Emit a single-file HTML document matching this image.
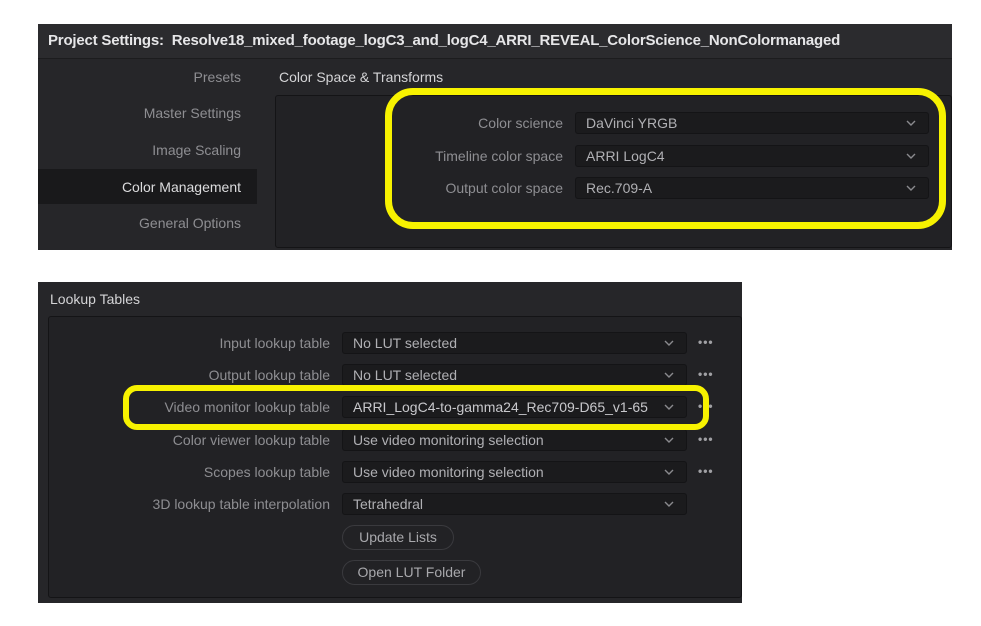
<!DOCTYPE html>
<html><head><meta charset="utf-8"><style>
*{margin:0;padding:0;box-sizing:border-box}
body{width:981px;height:626px;background:#fff;position:relative;overflow:hidden;font-family:"Liberation Sans",sans-serif;}
.a{position:absolute}
.t{position:absolute;white-space:nowrap;font-size:14px;color:#8e8e92;line-height:18px}
.r{text-align:right}
.dd{position:absolute;background:#1b1b1d;border:1px solid #141416;border-radius:3px;color:#b0b0b4;font-size:14px;line-height:20px;padding-left:10px;white-space:nowrap}
.dd svg{position:absolute;right:12px;top:7px}
.dots{position:absolute;color:#a0a0a4;font-size:12px;letter-spacing:1px;font-weight:bold}
.btn{position:absolute;border:1px solid #3a3a3e;border-radius:13px;color:#a8a8ac;font-size:14px;line-height:23px;text-align:center;background:#222225}
</style></head><body>
<div class="a" style="left:38px;top:24px;width:914px;height:226px;background:#262629"></div>
<div class="a" style="left:38px;top:24px;width:914px;height:35px;background:#2b2b2e;border-bottom:1px solid #1c1c1e"></div>
<div class="t" style="left:48px;top:32px;color:#e6e6e8;font-size:15px;font-weight:bold;letter-spacing:-0.2px">Project Settings:&nbsp; Resolve18_mixed_footage_logC3_and_logC4_ARRI_REVEAL_ColorScience_NonColormanaged</div>
<div class="t r" style="left:38px;width:203px;top:68px">Presets</div>
<div class="t r" style="left:38px;width:203px;top:104px">Master Settings</div>
<div class="t r" style="left:38px;width:203px;top:141px">Image Scaling</div>
<div class="a" style="left:38px;top:169px;width:219px;height:35px;background:#19191b"></div>
<div class="t r" style="left:38px;width:203px;top:178px;color:#dcdcde">Color Management</div>
<div class="t r" style="left:38px;width:203px;top:214px">General Options</div>
<div class="t" style="left:279px;top:68px;color:#d4d4d6">Color Space &amp; Transforms</div>
<div class="a" style="left:275px;top:95px;width:677px;height:153px;background:#222225;border:1px solid #141416;border-radius:3px"></div>
<div class="t r" style="left:380px;width:183px;top:114px">Color science</div>
<div class="t r" style="left:380px;width:183px;top:147px">Timeline color space</div>
<div class="t r" style="left:380px;width:183px;top:179px">Output color space</div>
<div class="dd" style="left:575px;top:112px;width:354px;height:22px">DaVinci YRGB<svg width="10" height="7"><path d="M1 1L5 5L9 1" stroke="#8a8a8e" stroke-width="1.4" fill="none"/></svg></div>
<div class="dd" style="left:575px;top:145px;width:354px;height:22px">ARRI LogC4<svg width="10" height="7"><path d="M1 1L5 5L9 1" stroke="#8a8a8e" stroke-width="1.4" fill="none"/></svg></div>
<div class="dd" style="left:575px;top:177px;width:354px;height:22px">Rec.709-A<svg width="10" height="7"><path d="M1 1L5 5L9 1" stroke="#8a8a8e" stroke-width="1.4" fill="none"/></svg></div>
<div class="a" style="left:385px;top:88px;width:561px;height:141px;border:7px solid #f7f200;border-radius:28px"></div>
<div class="a" style="left:38px;top:282px;width:704px;height:321px;background:#262629"></div>
<div class="t" style="left:50px;top:290px;color:#d4d4d6">Lookup Tables</div>
<div class="a" style="left:48px;top:316px;width:694px;height:282px;background:#222225;border:1px solid #141416;border-radius:3px"></div>
<div class="t r" style="left:100px;width:230px;top:334px">Input lookup table</div>
<div class="t r" style="left:100px;width:230px;top:366px">Output lookup table</div>
<div class="t r" style="left:100px;width:230px;top:398px">Video monitor lookup table</div>
<div class="t r" style="left:100px;width:230px;top:431px">Color viewer lookup table</div>
<div class="t r" style="left:100px;width:230px;top:463px">Scopes lookup table</div>
<div class="t r" style="left:100px;width:230px;top:495px">3D lookup table interpolation</div>
<div class="dd" style="left:342px;top:332px;width:345px;height:22px">No LUT selected<svg width="10" height="7"><path d="M1 1L5 5L9 1" stroke="#8a8a8e" stroke-width="1.4" fill="none"/></svg></div>
<div class="dd" style="left:342px;top:364px;width:345px;height:22px">No LUT selected<svg width="10" height="7"><path d="M1 1L5 5L9 1" stroke="#8a8a8e" stroke-width="1.4" fill="none"/></svg></div>
<div class="dd" style="left:342px;top:396px;width:345px;height:22px;color:#c8c8cc">ARRI_LogC4-to-gamma24_Rec709-D65_v1-65<svg width="10" height="7"><path d="M1 1L5 5L9 1" stroke="#8a8a8e" stroke-width="1.4" fill="none"/></svg></div>
<div class="dd" style="left:342px;top:429px;width:345px;height:22px">Use video monitoring selection<svg width="10" height="7"><path d="M1 1L5 5L9 1" stroke="#8a8a8e" stroke-width="1.4" fill="none"/></svg></div>
<div class="dd" style="left:342px;top:461px;width:345px;height:22px">Use video monitoring selection<svg width="10" height="7"><path d="M1 1L5 5L9 1" stroke="#8a8a8e" stroke-width="1.4" fill="none"/></svg></div>
<div class="dd" style="left:342px;top:493px;width:345px;height:22px">Tetrahedral<svg width="10" height="7"><path d="M1 1L5 5L9 1" stroke="#8a8a8e" stroke-width="1.4" fill="none"/></svg></div>
<div class="dots" style="left:698px;top:335px">•••</div>
<div class="dots" style="left:698px;top:367px">•••</div>
<div class="dots" style="left:698px;top:399px">•••</div>
<div class="dots" style="left:698px;top:432px">•••</div>
<div class="dots" style="left:698px;top:464px">•••</div>
<div class="btn" style="left:342px;top:525px;width:112px;height:25px">Update Lists</div>
<div class="btn" style="left:342px;top:560px;width:139px;height:25px">Open LUT Folder</div>
<div class="a" style="left:123px;top:385px;width:586px;height:45px;border:6px solid #f7f200;border-radius:14px"></div>
</body></html>
